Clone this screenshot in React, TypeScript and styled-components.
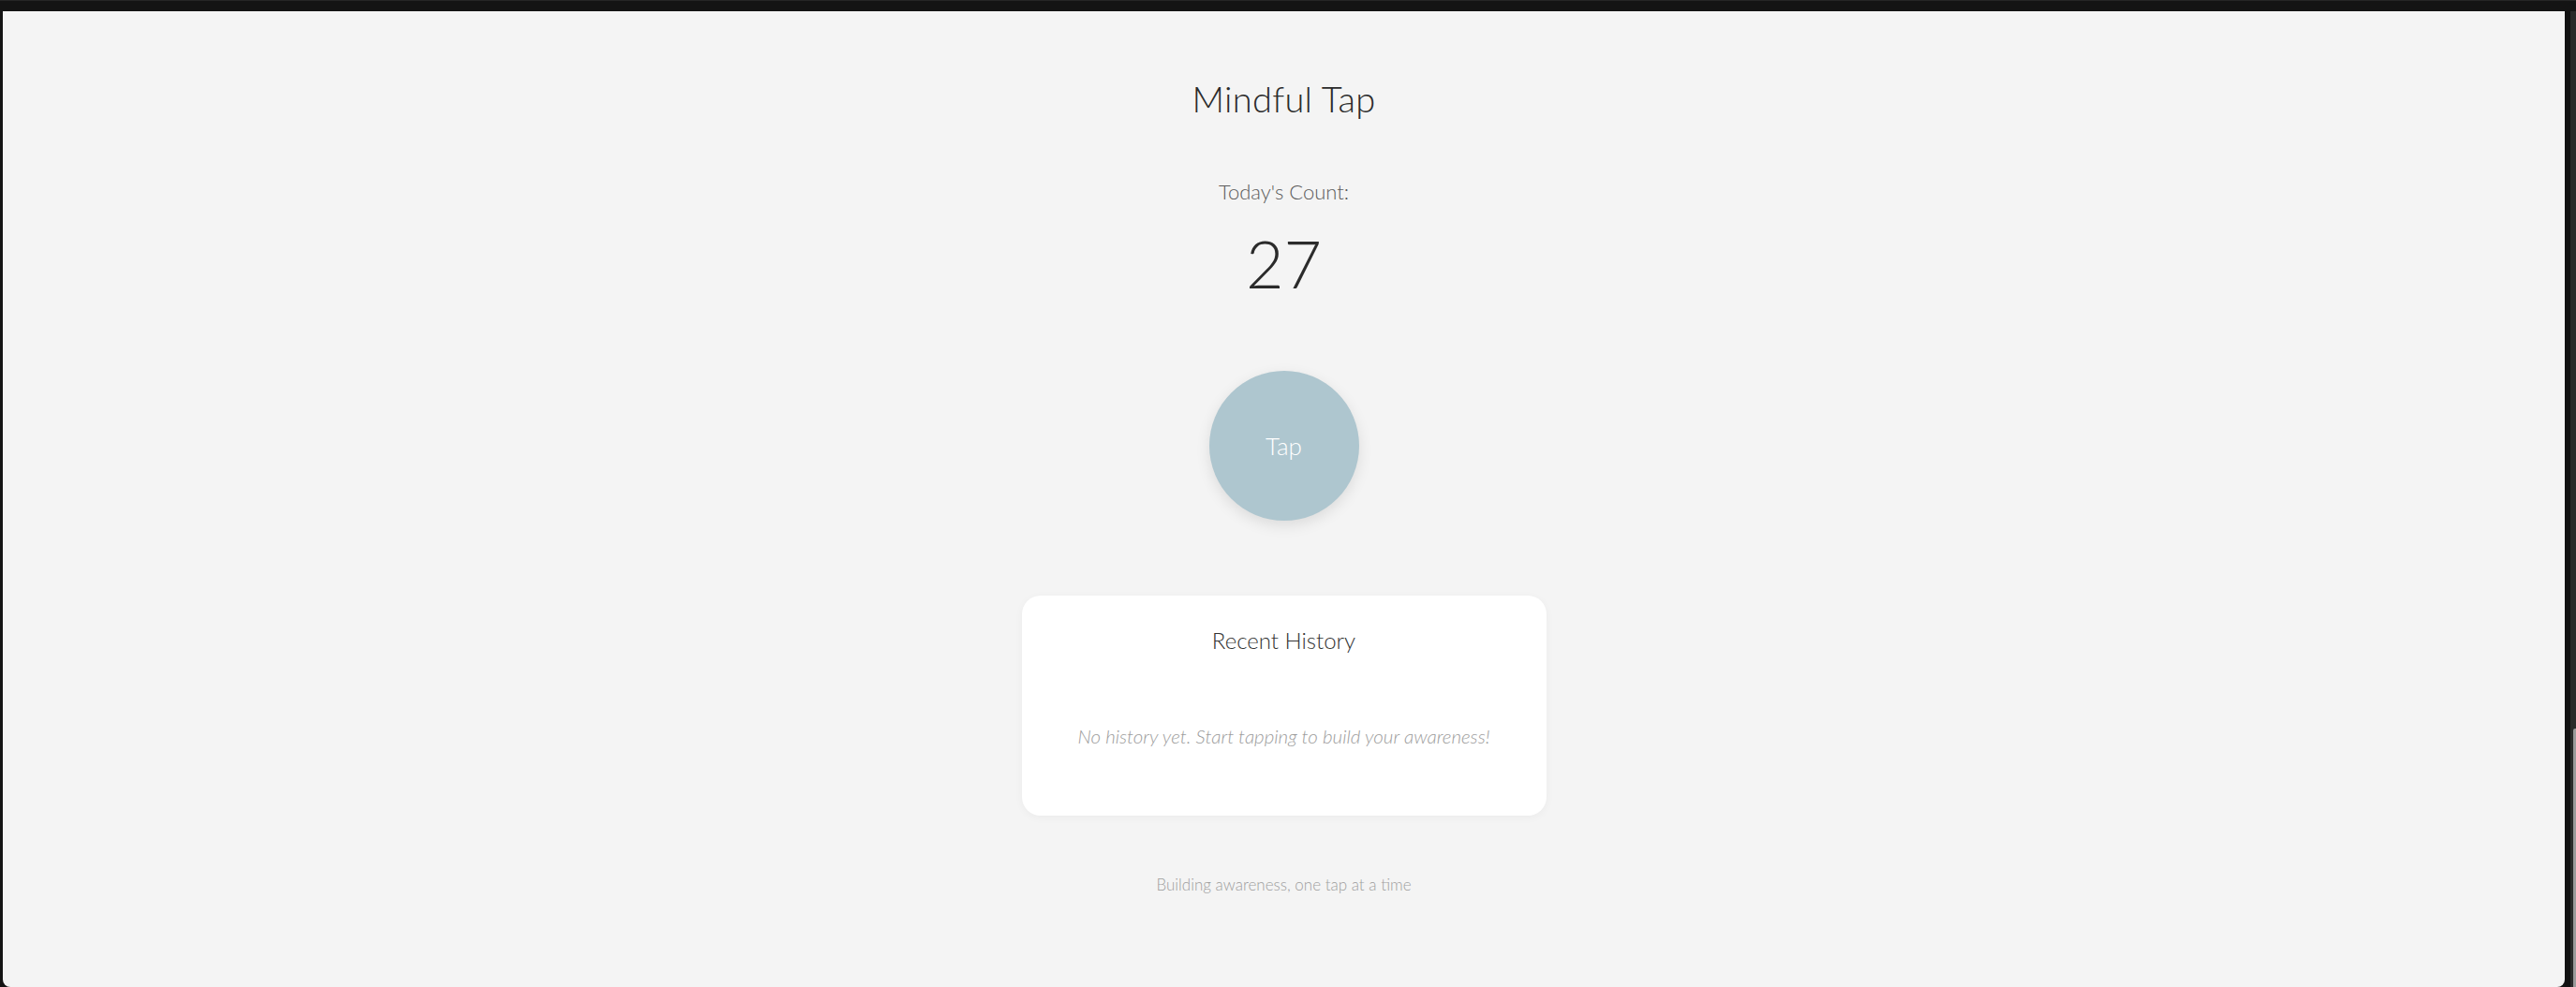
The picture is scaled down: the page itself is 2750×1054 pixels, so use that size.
import { useState } from 'react'
import styled, { createGlobalStyle } from 'styled-components'

const GlobalStyle = createGlobalStyle`
    html, body {
        margin: 0;
        padding: 0;
        background: #141414;
    }
    * {
        box-sizing: border-box;
    }
`;

const Screen = styled.div`
    display: flex;
    height: 1054px;
    padding: 11px 0 0 3px;
    background: #141414;
    border-top: 1px solid #262626;
    overflow: hidden;
`;

const AppWindow = styled.main`
    flex: 1;
    display: flex;
    flex-direction: column;
    align-items: center;
    background: #f4f4f4;
    border-radius: 0 0 8px 8px;
    padding-top: 71px;
    font-family: Lato, "Open Sans", "Liberation Sans", sans-serif;
    font-weight: 300;
`;

const ScrollTrack = styled.div`
    width: 12px;
    display: flex;
    flex-direction: column;
    align-items: flex-end;
    background: linear-gradient(to right, #111 50%, #2a2a2a 50%);
`;

const ScrollThumb = styled.div`
    width: 3px;
    flex: 1;
    margin-top: 766px;
    background: #9a9a9a;
    border-radius: 2px 0 0 0;
`;

const Title = styled.h1`
    margin: 0;
    font-size: 38px;
    font-weight: 300;
    line-height: 1.2;
    color: #2b2b2b;
    letter-spacing: 0.3px;
`;

const CountLabel = styled.div`
    margin-top: 63px;
    font-size: 22px;
    line-height: 1.2;
    color: #5c5c5c;
`;

const CountValue = styled.div`
    margin-top: 21px;
    font-size: 70px;
    line-height: 1.2;
    color: #2b2b2b;
`;

const TapButton = styled.button`
    margin-top: 73px;
    width: 160px;
    height: 160px;
    border: none;
    border-radius: 50%;
    background: #aec6cf;
    color: #fff;
    font-family: inherit;
    font-weight: 300;
    font-size: 26px;
    box-shadow: 0 5px 15px rgba(0, 0, 0, 0.1);
    cursor: pointer;
    transition: transform 120ms ease;

    &:active {
        transform: scale(0.96);
    }
`;

const HistoryCard = styled.section`
    margin-top: 80px;
    width: 560px;
    height: 235px;
    padding-top: 34px;
    display: flex;
    flex-direction: column;
    align-items: center;
    background: #fff;
    border-radius: 20px;
    box-shadow: 0 2px 10px rgba(0, 0, 0, 0.04);
`;

const CardTitle = styled.h2`
    margin: 0;
    font-size: 24px;
    font-weight: 300;
    line-height: 1.2;
    color: #333;
`;

const EmptyNote = styled.p`
    margin: 75px 0 0;
    font-size: 20.5px;
    font-style: italic;
    line-height: 1.2;
    color: #9c9c9c;
`;

const Footer = styled.footer`
    margin-top: 64px;
    font-size: 17px;
    line-height: 1.2;
    color: #9e9e9e;
`;

export default function App() {
    const [count, setCount] = useState(27);

    return (
        <>
            <GlobalStyle />
            <Screen>
                <AppWindow>
                    <Title>Mindful Tap</Title>
                    <CountLabel>Today's Count:</CountLabel>
                    <CountValue>{count}</CountValue>
                    <TapButton onClick={() => setCount(count + 1)}>Tap</TapButton>

                    <HistoryCard>
                        <CardTitle>Recent History</CardTitle>
                        <EmptyNote>No history yet. Start tapping to build your awareness!</EmptyNote>
                    </HistoryCard>

                    <Footer>Building awareness, one tap at a time</Footer>
                </AppWindow>
                <ScrollTrack>
                    <ScrollThumb />
                </ScrollTrack>
            </Screen>
        </>
    )
}
